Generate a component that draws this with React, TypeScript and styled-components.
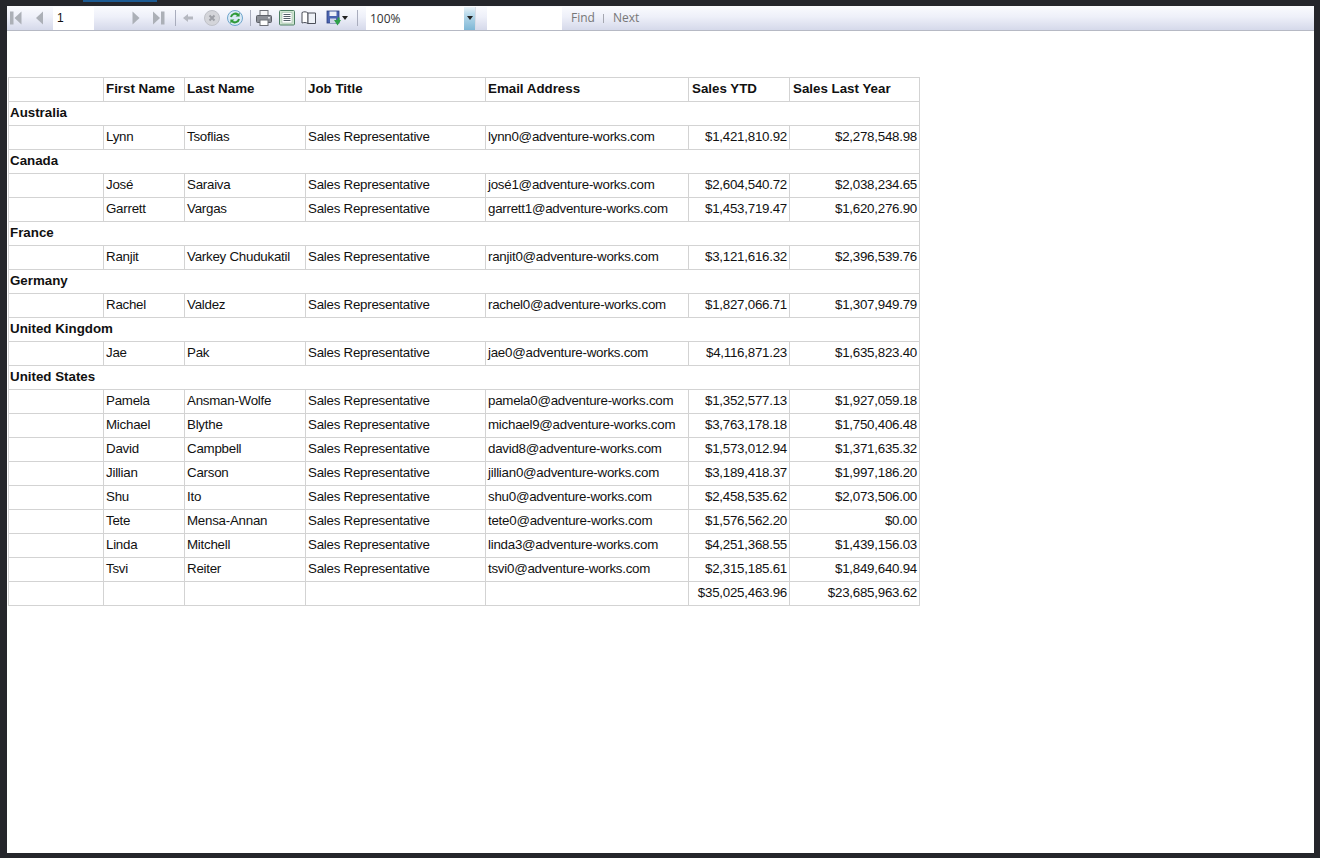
import React from "react";
import styled, { createGlobalStyle } from "styled-components";

const Global = createGlobalStyle`
  html, body { margin: 0; padding: 0; height: 100%; background: #25262b; }
  #root { height: 100%; }
`;

const Frame = styled.div`
  box-sizing: border-box;
  width: 1320px;
  height: 858px;
  padding: 6px 6px 5px 7px;
  background: #25262b;
  overflow: hidden;
  position: relative;
`;

const TopAccent = styled.div`
  position: absolute;
  left: 83px;
  top: 0;
  width: 74px;
  height: 2px;
  background: #1c5a92;
`;

const Window = styled.div`
  height: 100%;
  background: #fff;
  display: flex;
  flex-direction: column;
`;

const Toolbar = styled.div`
  height: 24px;
  flex: none;
  display: flex;
  align-items: center;
  background: linear-gradient(#fafbfe 0%, #eef0f9 45%, #d5d9ea 100%);
  border-bottom: 1px solid #b6b9c4;
  font-family: "Open Sans", "Noto Sans", sans-serif;
  font-size: 12px;
  color: #777;
`;

const Icon = styled.span<{ $w?: number; $ml?: number }>`
  flex: none;
  width: ${(p) => p.$w ?? 18}px;
  height: 18px;
  margin-left: ${(p) => p.$ml ?? 0}px;
  display: flex;
  align-items: center;
  justify-content: center;
`;

const Sep = styled.span<{ $ml: number }>`
  flex: none;
  width: 1px;
  height: 16px;
  margin-left: ${(p) => p.$ml}px;
  background: #a9adbd;
`;

const Input = styled.div<{ $w: number; $ml: number }>`
  flex: none;
  box-sizing: border-box;
  width: ${(p) => p.$w}px;
  height: 23px;
  margin-left: ${(p) => p.$ml}px;
  background: #fff;
  color: #222;
  padding-left: 4px;
  display: flex;
  align-items: center;
  justify-content: space-between;
`;

const PageNum = styled.span`
  font-family: "Liberation Sans", sans-serif;
  font-size: 12px;
  color: #111;
`;

const ZoomText = styled.span`
  font-size: 12px;
  color: #333;
`;

const DropBtn = styled.span`
  width: 11px;
  height: 23px;
  margin-top: 0;
  background: linear-gradient(#e9f2f8 0%, #bcdcec 30%, #7fb7d6 100%);
  border-right: 1px solid #d8dce6;
  display: flex;
  align-items: center;
  justify-content: center;
`;

const LinkText = styled.span<{ $ml: number }>`
  margin-left: ${(p) => p.$ml}px;
  color: #777;
  line-height: 1;
`;

const Pipe = styled.span<{ $ml: number }>`
  flex: none;
  width: 1px;
  height: 9px;
  margin-left: ${(p) => p.$ml}px;
  background: #a5a7b0;
`;

const Content = styled.div`
  flex: 1;
  padding: 46px 0 0 1px;
`;

const Table = styled.table`
  border-collapse: collapse;
  table-layout: fixed;
  width: 912px;
  font-family: "Liberation Sans", Arial, sans-serif;
  font-size: 13.33px;
  color: #111;
`;

const Row = styled.tr`
  height: 24px;
`;

const Cell = styled.td<{ $right?: boolean }>`
  box-sizing: border-box;
  height: 24px;
  padding: 0 2px 2px;
  border: 1px solid #d3d3d3;
  white-space: nowrap;
  overflow: hidden;
  font-weight: 400;
  letter-spacing: -0.25px;
  text-align: ${(p) => (p.$right ? "right" : "left")};
  line-height: 20px;
`;

const HeadCell = styled(Cell)<{ $pl?: number }>`
  font-weight: 700;
  letter-spacing: 0;
  padding-left: ${(p) => p.$pl ?? 2}px;
`;

const GroupCell = styled(Cell)`
  font-weight: 700;
  letter-spacing: 0;
  padding-left: 1px;
`;

type Person = [string, string, string, string, string];
const groups: [string, Person[]][] = [
  ["Australia", [["Lynn", "Tsoflias", "lynn0@adventure-works.com", "$1,421,810.92", "$2,278,548.98"]]],
  ["Canada", [
    ["José", "Saraiva", "josé1@adventure-works.com", "$2,604,540.72", "$2,038,234.65"],
    ["Garrett", "Vargas", "garrett1@adventure-works.com", "$1,453,719.47", "$1,620,276.90"],
  ]],
  ["France", [["Ranjit", "Varkey Chudukatil", "ranjit0@adventure-works.com", "$3,121,616.32", "$2,396,539.76"]]],
  ["Germany", [["Rachel", "Valdez", "rachel0@adventure-works.com", "$1,827,066.71", "$1,307,949.79"]]],
  ["United Kingdom", [["Jae", "Pak", "jae0@adventure-works.com", "$4,116,871.23", "$1,635,823.40"]]],
  ["United States", [
    ["Pamela", "Ansman-Wolfe", "pamela0@adventure-works.com", "$1,352,577.13", "$1,927,059.18"],
    ["Michael", "Blythe", "michael9@adventure-works.com", "$3,763,178.18", "$1,750,406.48"],
    ["David", "Campbell", "david8@adventure-works.com", "$1,573,012.94", "$1,371,635.32"],
    ["Jillian", "Carson", "jillian0@adventure-works.com", "$3,189,418.37", "$1,997,186.20"],
    ["Shu", "Ito", "shu0@adventure-works.com", "$2,458,535.62", "$2,073,506.00"],
    ["Tete", "Mensa-Annan", "tete0@adventure-works.com", "$1,576,562.20", "$0.00"],
    ["Linda", "Mitchell", "linda3@adventure-works.com", "$4,251,368.55", "$1,439,156.03"],
    ["Tsvi", "Reiter", "tsvi0@adventure-works.com", "$2,315,185.61", "$1,849,640.94"],
  ]],
];

const widths = [95, 81, 121, 180, 203, 101, 130];

const Svg: React.FC<{ w?: number; h?: number; children: React.ReactNode }> = ({ w = 18, h = 18, children }) => (
  <svg width={w} height={h} viewBox={`0 0 ${w} ${h}`}>{children}</svg>
);

const grey = "#acb0b7";

const First = () => (
  <Svg><rect x="3" y="2.5" width="3.5" height="13" fill={grey} /><path d="M14.5 2.5v13L7.5 9z" fill={grey} /></Svg>
);
const Prev = () => (
  <Svg><path d="M13 2.5v13L6 9z" fill={grey} /></Svg>
);
const Next = () => (
  <Svg><path d="M5.5 2.5v13L12.5 9z" fill={grey} /></Svg>
);
const Last = () => (
  <Svg><path d="M3 2.5v13L10 9z" fill={grey} /><rect x="11" y="2.5" width="3.5" height="13" fill={grey} /></Svg>
);
const Back = () => (
  <Svg><path d="M4 9l5-4v2.5h5v3H9V13z" fill="#b5b8c0" /></Svg>
);
const Stop = () => (
  <Svg>
    <circle cx="9" cy="9" r="7.5" fill="#d4d5da" stroke="#bfc1c8" />
    <path d="M6.5 6.5l5 5m0-5l-5 5" stroke="#9d9fa6" strokeWidth="2" />
  </Svg>
);
const Refresh = () => (
  <Svg>
    <circle cx="9" cy="9" r="7.5" fill="#dbeaf6" stroke="#6fa6cc" />
    <path d="M5 8a4.2 4.2 0 0 1 7-2.2" fill="none" stroke="#2f9a38" strokeWidth="2" />
    <path d="M13.6 3.4v4h-4z" fill="#2f9a38" />
    <path d="M13 10a4.2 4.2 0 0 1-7 2.2" fill="none" stroke="#2f9a38" strokeWidth="2" />
    <path d="M4.4 14.6v-4h4z" fill="#2f9a38" />
  </Svg>
);
const Print = () => (
  <Svg>
    <rect x="5" y="1.5" width="8" height="5" fill="#f4f4f6" stroke="#6d7077" />
    <rect x="1.5" y="6.5" width="15" height="7" rx="1" fill="#8b8e96" stroke="#5d6068" />
    <rect x="5" y="11" width="8" height="5.5" fill="#fff" stroke="#6d7077" />
    <rect x="13" y="8" width="2" height="1.5" fill="#dfe1e6" />
  </Svg>
);
const Layout = () => (
  <Svg>
    <rect x="1.5" y="1.5" width="15" height="14.5" rx="1" fill="#cfe6d0" stroke="#4d7f63" />
    <rect x="4" y="3.5" width="10" height="10.5" fill="#fff" stroke="#9fb9a8" strokeWidth=".6" />
    <path d="M5.5 5.5h7M5.5 7.5h7M5.5 9.5h7M5.5 11.5h7" stroke="#55606a" />
  </Svg>
);
const Book = () => (
  <Svg>
    <path d="M2 3.5c2-1 4-1 6 .5v10.5c-2-1.2-4-1.2-6-.5z" fill="#fff" stroke="#4b4f59" />
    <path d="M8 4h7.5v10.5H8z" fill="#eef1f7" stroke="#4b4f59" />
  </Svg>
);
const Save = () => (
  <Svg w={16}>
    <rect x="1" y="2" width="12" height="12" fill="#4a63b0" stroke="#2c3f80" strokeWidth=".8" />
    <rect x="3.5" y="2.5" width="7" height="4.5" fill="#eef1f8" />
    <rect x="4" y="9.5" width="6" height="4.5" fill="#cfd6e8" />
    <path d="M9 11h3.5V8.5h2V11H16l-3.5 5.5z" fill="#2fa04a" transform="translate(-1 0)" />
  </Svg>
);
const Caret = () => (
  <svg width="6" height="4" viewBox="0 0 6 4"><path d="M0 0h6L3 4z" fill="#222" /></svg>
);

export default function App() {
  return (
    <>
      <Global />
      <Frame>
        <TopAccent />
        <Window>
          <Toolbar>
            <Icon $ml={0}><First /></Icon>
            <Icon $ml={5}><Prev /></Icon>
            <Input $w={41} $ml={5}><PageNum>1</PageNum></Input>
            <Icon $ml={33}><Next /></Icon>
            <Icon $ml={5}><Last /></Icon>
            <Sep $ml={7} />
            <Icon $ml={3}><Back /></Icon>
            <Icon $ml={6}><Stop /></Icon>
            <Icon $ml={5}><Refresh /></Icon>
            <Sep $ml={6} />
            <Icon $ml={4}><Print /></Icon>
            <Icon $ml={5}><Layout /></Icon>
            <Icon $ml={4}><Book /></Icon>
            <Icon $w={16} $ml={8}><Save /></Icon>
            <Icon $w={6} $ml={0}><Caret /></Icon>
            <Sep $ml={9} />
            <Input $w={110} $ml={8}>
              <ZoomText>100%</ZoomText>
              <DropBtn><Caret /></DropBtn>
            </Input>
            <Input $w={75} $ml={11} />
            <LinkText $ml={9}>Find</LinkText>
            <Pipe $ml={8} />
            <LinkText $ml={9}>Next</LinkText>
          </Toolbar>
          <Content>
            <Table>
              <colgroup>
                {widths.map((w, i) => <col key={i} style={{ width: w }} />)}
              </colgroup>
              <tbody>
                <Row>
                  <Cell />
                  <HeadCell>First Name</HeadCell>
                  <HeadCell>Last Name</HeadCell>
                  <HeadCell>Job Title</HeadCell>
                  <HeadCell>Email Address</HeadCell>
                  <HeadCell $pl={3}>Sales YTD</HeadCell>
                  <HeadCell $pl={3}>Sales Last Year</HeadCell>
                </Row>
                {groups.map(([name, people]) => (
                  <React.Fragment key={name}>
                    <Row><GroupCell colSpan={7}>{name}</GroupCell></Row>
                    {people.map((p) => (
                      <Row key={p[2]}>
                        <Cell />
                        <Cell>{p[0]}</Cell>
                        <Cell>{p[1]}</Cell>
                        <Cell>Sales Representative</Cell>
                        <Cell>{p[2]}</Cell>
                        <Cell $right>{p[3]}</Cell>
                        <Cell $right>{p[4]}</Cell>
                      </Row>
                    ))}
                  </React.Fragment>
                ))}
                <Row>
                  <Cell /><Cell /><Cell /><Cell /><Cell />
                  <Cell $right>$35,025,463.96</Cell>
                  <Cell $right>$23,685,963.62</Cell>
                </Row>
              </tbody>
            </Table>
          </Content>
        </Window>
      </Frame>
    </>
  );
}
